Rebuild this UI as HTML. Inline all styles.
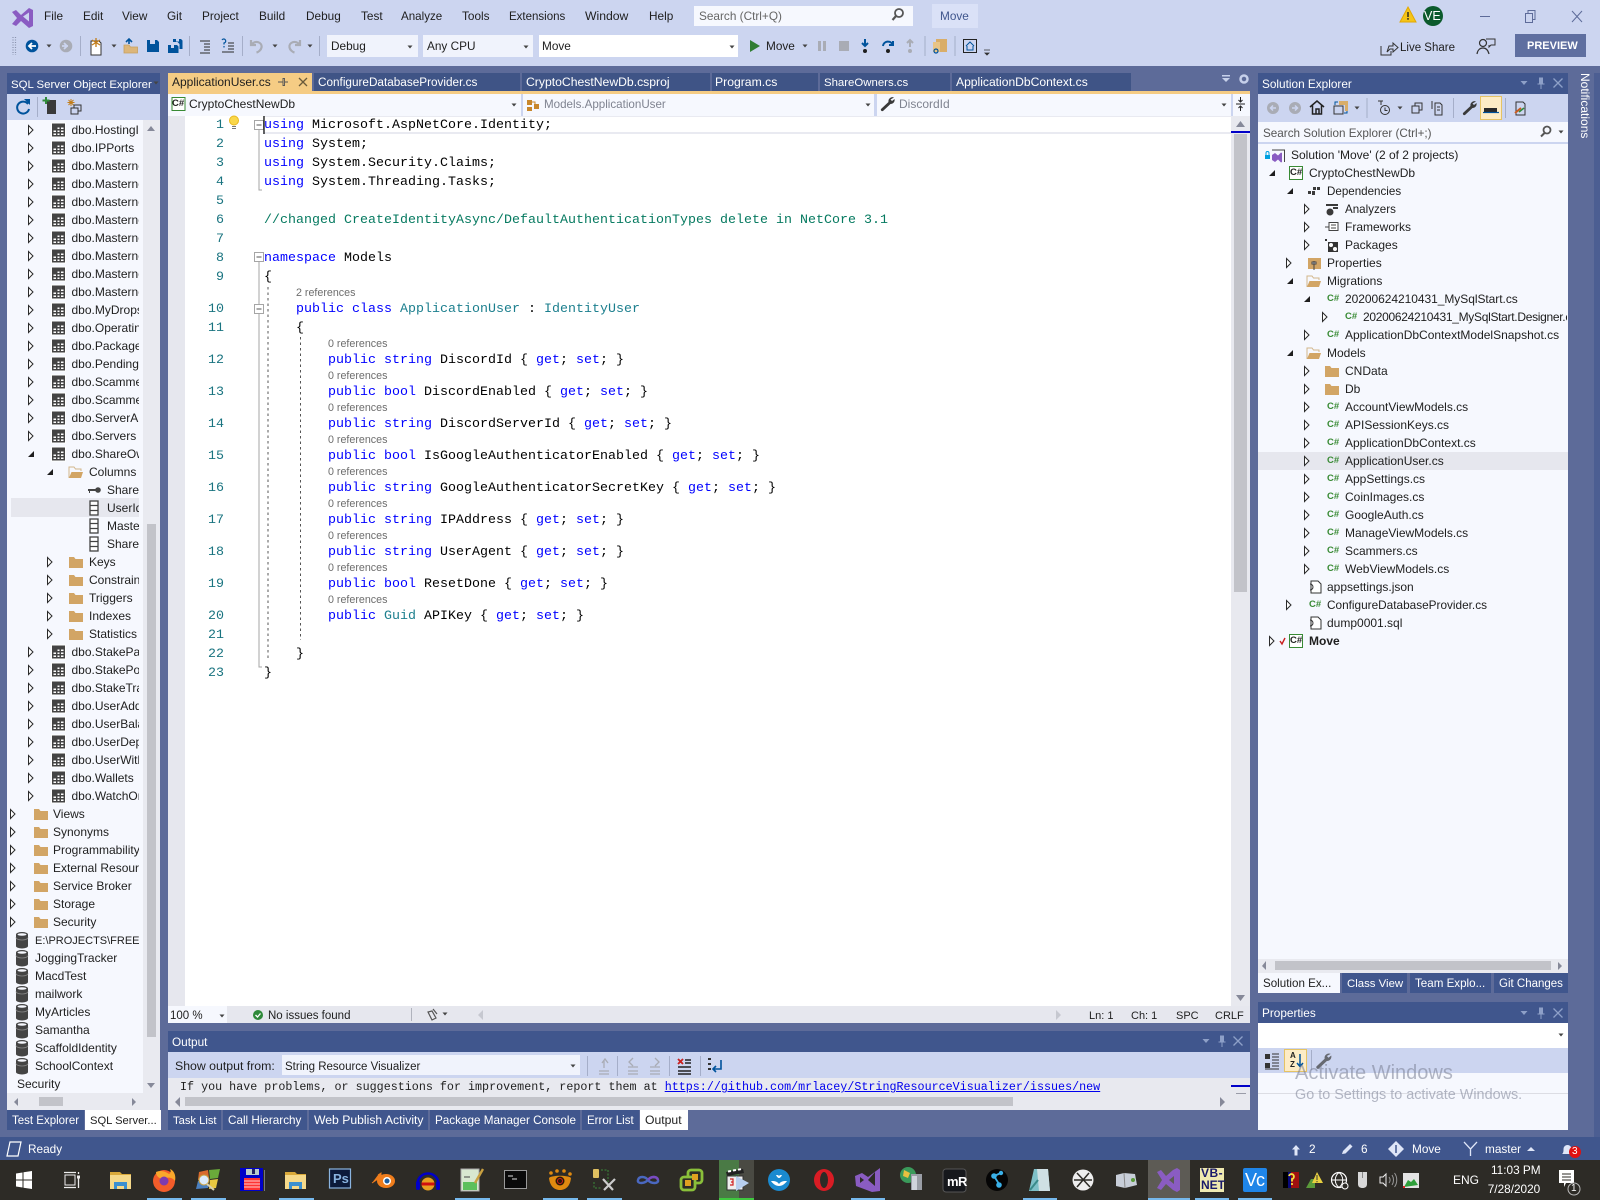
<!DOCTYPE html>
<html><head><meta charset="utf-8"><title>Visual Studio</title>
<style>
html,body{margin:0;padding:0;background:#5d6b99;width:1600px;height:1200px;overflow:hidden}
body{position:relative;font:12.2px/18px "Liberation Sans",sans-serif;color:#1e1e1e}
.b{position:absolute}
.t{position:absolute;white-space:nowrap;font:11.8px/18px "Liberation Sans",sans-serif;color:#1e1e1e}
.tr .t{font-size:12px}
.w{color:#fff}
.g{color:#7f8390}
.c{position:absolute;left:264px;white-space:pre;font:13.3px/19px "Liberation Mono",monospace;letter-spacing:.02px;color:#000}
.n{position:absolute;left:190px;width:34px;text-align:right;font:13.3px/19px "Liberation Mono",monospace;color:#1a7480}
.r{position:absolute;left:328px;white-space:nowrap;font:10.7px/14px "Liberation Sans",sans-serif;color:#6d6d6d}
.k{color:#0000ff}.y{color:#1c7f8e}.m{color:#067a60}
.cs{position:absolute;white-space:nowrap;font:bold 9.5px/18px "Liberation Sans",sans-serif;color:#388a34}
svg{position:absolute;left:0;top:0}
</style></head><body>
<!-- backgrounds -->
<div class="b" style="left:0;top:0;width:1600px;height:66px;background:#ccd5f0"></div>
<div class="b" style="left:694px;top:6px;width:219px;height:20px;background:#f6f8fe;border:0"></div>
<div class="b" style="left:932px;top:4px;width:46px;height:24px;background:#dae1f7"></div>
<div class="b" style="left:327px;top:35px;width:91px;height:22px;background:#f0f3fc"></div>
<div class="b" style="left:423px;top:35px;width:110px;height:22px;background:#f0f3fc"></div>
<div class="b" style="left:539px;top:35px;width:199px;height:22px;background:#fff"></div>
<div class="b" style="left:1515px;top:34px;width:71px;height:23px;background:#5f6fa0"></div>
<!-- left panel -->
<div class="b" style="left:7px;top:73px;width:153px;height:21px;background:#40568d"></div>
<div class="b" style="left:7px;top:94px;width:153px;height:26px;background:#ccd5f0"></div>
<div class="b" style="left:7px;top:120px;width:153px;height:990px;background:#f6f8fe"></div>
<div class="b" style="left:143px;top:120px;width:17px;height:990px;background:#e9eaf0"></div>
<div class="b" style="left:147px;top:524px;width:9px;height:513px;background:#c2c3c9"></div>
<div class="b" style="left:7px;top:1093px;width:153px;height:17px;background:#e9eaf0"></div>
<div class="b" style="left:39px;top:1097px;width:24px;height:9px;background:#c2c3c9"></div>
<div class="b" style="left:11px;top:498px;width:128px;height:19px;background:#e6e7ee"></div>
<div class="b" style="left:7px;top:1110px;width:77px;height:20px;background:#40568d"></div>
<div class="b" style="left:85px;top:1110px;width:76px;height:20px;background:#fff"></div>
<!-- tabs -->
<div class="b" style="left:168px;top:73px;width:144px;height:18px;background:#f5cc84"></div>
<div class="b" style="left:314px;top:73px;width:206px;height:18px;background:#3f5486"></div>
<div class="b" style="left:522px;top:73px;width:188px;height:18px;background:#3f5486"></div>
<div class="b" style="left:712px;top:73px;width:106px;height:18px;background:#3f5486"></div>
<div class="b" style="left:820px;top:73px;width:130px;height:18px;background:#3f5486"></div>
<div class="b" style="left:952px;top:73px;width:179px;height:18px;background:#3f5486"></div>
<div class="b" style="left:168px;top:91px;width:1082px;height:3px;background:#f5cc84"></div>
<!-- editor -->
<div class="b" style="left:168px;top:94px;width:1082px;height:22px;background:#f6f8fe"></div>
<div class="b" style="left:521px;top:94px;width:2px;height:22px;background:#ccd5f0"></div>
<div class="b" style="left:874px;top:94px;width:3px;height:22px;background:#ccd5f0"></div>
<div class="b" style="left:1231px;top:94px;width:2px;height:22px;background:#ccd5f0"></div>
<div class="b" style="left:168px;top:116px;width:1082px;height:890px;background:#fff"></div>
<div class="b" style="left:168px;top:116px;width:17px;height:890px;background:#e6e7ee"></div>
<div class="b" style="left:263px;top:116px;width:968px;height:15px;border:1px solid #e9eaf1;border-width:1px 0 2px 1px"></div>
<div class="b" style="left:1231px;top:116px;width:19px;height:890px;background:#e8e9ef"></div>
<div class="b" style="left:1234px;top:134px;width:13px;height:458px;background:#c2c3c9"></div>
<div class="b" style="left:1231px;top:131px;width:19px;height:2px;background:#0000c8"></div>
<div class="b" style="left:168px;top:1006px;width:1082px;height:17px;background:#e6e7ee"></div>
<div class="b" style="left:168px;top:1006px;width:59px;height:17px;background:#f6f8fe"></div>
<div class="b" style="left:411px;top:1008px;width:1px;height:13px;background:#b0b3bd"></div>
<!-- output -->
<div class="b" style="left:168px;top:1031px;width:1082px;height:21px;background:#40568d"></div>
<div class="b" style="left:168px;top:1052px;width:1082px;height:26px;background:#ccd5f0"></div>
<div class="b" style="left:282px;top:1055px;width:298px;height:20px;background:#f0f3fc"></div>
<div class="b" style="left:168px;top:1078px;width:1082px;height:32px;background:#e8e9ef"></div>
<div class="b" style="left:185px;top:1097px;width:828px;height:9px;background:#c2c3c9"></div>
<div class="b" style="left:1231px;top:1085px;width:19px;height:2px;background:#0000c8"></div>
<div class="b" style="left:1231px;top:1093px;width:10px;height:1px;background:#9a9ca8;margin-left:5px"></div>
<!-- bottom tabs -->
<div class="b" style="left:168px;top:1110px;width:53px;height:20px;background:#40568d"></div>
<div class="b" style="left:223px;top:1110px;width:84px;height:20px;background:#40568d"></div>
<div class="b" style="left:309px;top:1110px;width:119px;height:20px;background:#40568d"></div>
<div class="b" style="left:430px;top:1110px;width:150px;height:20px;background:#40568d"></div>
<div class="b" style="left:582px;top:1110px;width:57px;height:20px;background:#40568d"></div>
<div class="b" style="left:640px;top:1110px;width:48px;height:20px;background:#fff"></div>
<!-- solution explorer -->
<div class="b" style="left:1258px;top:73px;width:310px;height:21px;background:#40568d"></div>
<div class="b" style="left:1258px;top:94px;width:310px;height:28px;background:#ccd5f0"></div>
<div class="b" style="left:1480px;top:96px;width:20px;height:22px;background:#fdecc6;border:1px solid #e5c365"></div>
<div class="b" style="left:1258px;top:122px;width:310px;height:20px;background:#f6f8fe"></div>
<div class="b" style="left:1258px;top:142px;width:310px;height:817px;background:#f6f8fe;border-top:2px solid #ccd5f0;box-sizing:border-box"></div>
<div class="b" style="left:1258px;top:452px;width:310px;height:18px;background:#e6e7ee"></div>
<div class="b" style="left:1258px;top:959px;width:310px;height:14px;background:#e9eaf0"></div>
<div class="b" style="left:1275px;top:961px;width:276px;height:9px;background:#c2c3c9"></div>
<div class="b" style="left:1258px;top:973px;width:82px;height:20px;background:#f6f8fe"></div>
<div class="b" style="left:1342px;top:973px;width:65px;height:20px;background:#40568d"></div>
<div class="b" style="left:1410px;top:973px;width:81px;height:20px;background:#40568d"></div>
<div class="b" style="left:1494px;top:973px;width:74px;height:20px;background:#40568d"></div>
<!-- properties -->
<div class="b" style="left:1258px;top:1002px;width:310px;height:21px;background:#40568d"></div>
<div class="b" style="left:1258px;top:1023px;width:310px;height:25px;background:#fff"></div>
<div class="b" style="left:1258px;top:1048px;width:310px;height:25px;background:#ccd5f0"></div>
<div class="b" style="left:1258px;top:1073px;width:310px;height:57px;background:#f6f8fe"></div>
<div class="b" style="left:1258px;top:1093px;width:310px;height:1px;background:#dcdde4"></div>
<div class="b" style="left:1284px;top:1049px;width:21px;height:21px;background:#fdecc6;border:1px solid #e5c365"></div>
<div class="b" style="left:1594px;top:73px;width:6px;height:1064px;background:#4c5e92"></div>
<!-- status + taskbar -->
<div class="b" style="left:0;top:1137px;width:1600px;height:23px;background:#40568d"></div>
<div class="b" style="left:0;top:1160px;width:1600px;height:40px;background:#2d2b26"></div>
<div class="b" style="left:719px;top:1160px;width:20px;height:38px;background:#4a7a45"></div>
<div class="b" style="left:739px;top:1160px;width:15px;height:38px;background:#4a4a43"></div>
<div class="b" style="left:1148px;top:1160px;width:42px;height:38px;background:#5d5b55"></div>
<div class="b" style="left:147px;top:1198px;width:35px;height:2px;background:#76b9ed"></div>
<div class="b" style="left:191px;top:1198px;width:35px;height:2px;background:#76b9ed"></div>
<div class="b" style="left:279px;top:1198px;width:35px;height:2px;background:#76b9ed"></div>
<div class="b" style="left:455px;top:1198px;width:35px;height:2px;background:#76b9ed"></div>
<div class="b" style="left:543px;top:1198px;width:35px;height:2px;background:#76b9ed"></div>
<div class="b" style="left:587px;top:1198px;width:35px;height:2px;background:#76b9ed"></div>
<div class="b" style="left:719px;top:1198px;width:35px;height:2px;background:#3fc83f"></div>
<div class="b" style="left:851px;top:1198px;width:34px;height:2px;background:#76b9ed"></div>
<div class="b" style="left:1023px;top:1198px;width:34px;height:2px;background:#76b9ed"></div>
<div class="b" style="left:1148px;top:1198px;width:42px;height:2px;background:#76b9ed"></div>
<div class="b" style="left:1195px;top:1198px;width:34px;height:2px;background:#76b9ed"></div>
<div class="b" style="left:1238px;top:1198px;width:34px;height:2px;background:#76b9ed"></div>

<!-- icons overlay -->
<svg width="1600" height="1200" viewBox="0 0 1600 1200">
<defs>
<g id="a0"><path d="M-2.5-4.5L2 0-2.5 4.5z" fill="#fff" stroke="#2a2a2a"/></g>
<g id="a1"><path d="M3-3V3H-3z" fill="#1e1e1e"/></g>
<g id="tb"><rect x="-7.500" y="-7.500" width="15" height="15" fill="#fff"/><rect x="-6.500" y="-6.500" width="13" height="13" fill="#444"/><path d="M-1-2.500h2v1.500h-2zM2.500-2.500h2.500v1.500h-2.500zM-5 .5h2.500V2H-5zM-1 .5h2V2h-2zM2.500 .5H5V2H2.500zM-5 3.500h2.500V5H-5zM-1 3.500h2V5h-2zM2.500 3.500H5V5H2.500z" fill="#fff"/></g>
<g id="fo"><path d="M-7-5h5l1.500 2H7V6H-7z" fill="#d2a565"/></g>
<g id="fx"><path d="M-7 6V-5h5l1.500 2H5v2" fill="none" stroke="#d2b68a"/><path d="M-7 6l2.500-6H7L5 6z" fill="#d2a565"/></g>
<g id="col"><rect x="-4" y="-7" width="8" height="14" fill="#fff" stroke="#424242" stroke-width="1.300"/><path d="M-4-2.500h8M-4 2.500h8" stroke="#424242" stroke-width="1.200"/></g>
<g id="key"><circle cx="4" cy="0" r="2.800" fill="#444"/><path d="M-6-1h8v2h-6v2h-1v-2h-1z" fill="#444"/></g>
<g id="db"><path d="M-6-5.500A6 2.500 0 0 1 6-5.500V6A6 2.500 0 0 1-6 6z" fill="#444"/><ellipse cx="0" cy="-5.500" rx="4.500" ry="1.300" fill="#f6f8fe"/><path d="M-6-2.500A6 2.500 0 0 0 6-2.500" fill="none" stroke="#888" stroke-width=".8"/></g>
<g id="bx"><rect x="-6.500" y="-6.500" width="13" height="13" fill="#fff" stroke="#388a34"/></g>
<g id="dd"><path d="M-2.500-1.500h5L0 1.500z" fill="#444"/></g>
<g id="ddw"><path d="M-3.500-2h7L0 2z" fill="#8ea0c8"/></g>
<g id="pin"><path d="M-2-5.500h4v6h1.500v1H.5V6h-1V1.500h-3v-1H-2z" fill="#8ea0c8"/></g>
<g id="xx"><path d="M-4.500-4.500l9 9M4.500-4.500l-9 9" stroke="#8ea0c8" stroke-width="1.300"/></g>
<g id="sp"><rect x="-.5" y="-10" width="1" height="20" fill="#a5aec9"/></g>
<g id="wr"><path d="M7-6.500A4 4 0 0 0 1.500-2L-6 5a1.500 1.500 0 0 0 2 2l7.500-7A4 4 0 0 0 7.500-5L5-3 3.500-4.500z" fill="#3a3a3a"/></g>
</defs>

<!-- title bar icons -->
<path d="M12 12l4-2 5 5 8-7 4 2v16l-4 2-8-7-5 5-4-2 5-6z" fill="#8a5cc2"/><path d="M23 16.500l6-4v9z" fill="#ccd5f0"/>
<circle cx="899" cy="13" r="4" fill="none" stroke="#555" stroke-width="1.800"/><path d="M896 16l-3.500 4" stroke="#555" stroke-width="2.200"/>
<path d="M1408 7l8 15h-16z" fill="#f5c518" stroke="#e3a800"/><path d="M1407.300 12h1.400v5h-1.400zM1407.300 18h1.400v1.800h-1.400z" fill="#222"/>
<circle cx="1433" cy="16" r="10" fill="#0b5a2c"/>
<path d="M1480 16.500h10" stroke="#5d6b99"/><rect x="1525.500" y="13.500" width="7" height="9" fill="none" stroke="#5d6b99"/><path d="M1528 13.500v-3h7v9h-2.500" fill="none" stroke="#5d6b99"/>
<path d="M1572 11l10 11M1582 11l-10 11" stroke="#5d6b99"/>

<!-- main toolbar -->
<path d="M13 37v18M15.500 37v18" stroke="#8a93ad" stroke-width="1.200" stroke-dasharray="1 1.500"/>
<circle cx="32" cy="46" r="6.300" fill="#00539c"/><path d="M36 46h-6M32 43l-3 3 3 3" fill="none" stroke="#fff" stroke-width="1.800"/><use href="#dd" x="49" y="46"/>
<circle cx="66" cy="46" r="6.300" fill="#a9acb5"/><path d="M62 46h6M64 43l3 3-3 3" fill="none" stroke="#ccd5f0" stroke-width="1.800"/>
<use href="#sp" x="80.500" y="46"/>
<path d="M91 41v14h10V43l-2-2z" fill="#fff" stroke="#333"/><path d="M96 38v9M92 40l8 5M100 40l-8 5" stroke="#c27d1a" stroke-width="1.300"/><use href="#dd" x="114" y="46"/>
<path d="M124 53V45h5l1.500 2h7v6z" fill="#dcb67a" stroke="#c6a060" stroke-width=".8"/><path d="M126 42l3-3 3 3M129 39v5" fill="none" stroke="#00539c" stroke-width="1.600"/>
<path d="M147 40h10l2 2v10h-12z" fill="#00539c"/><rect x="150" y="40" width="5" height="4" fill="#ccd5f0"/>
<path d="M168 45h9l1.500 1.500V53H168z" fill="#00539c"/><path d="M173 39h8l1.500 1.500V49h-3v-5l-2-2h-4.500z" fill="#00539c"/><rect x="171" y="45" width="3" height="3" fill="#ccd5f0"/><rect x="176" y="39" width="3" height="2.500" fill="#ccd5f0"/>
<use href="#sp" x="189.500" y="46"/>
<path d="M200 41h10M204 44h6M204 47h6M204 50h6M200 53h10" stroke="#2a2a2a"/>
<path d="M222 40a2 2 0 1 1 2 3v1.500M224 46v1.500" fill="none" stroke="#00539c" stroke-width="1.200"/><path d="M228 43h6M228 46h6M228 49h6M222 52h12" stroke="#2a2a2a"/>
<use href="#sp" x="242.500" y="46"/>
<path d="M251 40v5h5M251.500 44.500c4-5 11-2 10 3-.5 2.500-3 4.500-5 5" fill="none" stroke="#a9acb5" stroke-width="2.200"/><use href="#dd" x="275" y="46"/>
<path d="M300 40v5h-5M299.500 44.500c-4-5-11-2-10 3 .5 2.500 3 4.500 5 5" fill="none" stroke="#a9acb5" stroke-width="2.200"/><use href="#dd" x="310" y="46"/>
<use href="#sp" x="319.500" y="46"/>
<use href="#dd" x="410" y="47"/><use href="#dd" x="526" y="47"/><use href="#dd" x="732" y="47"/>
<path d="M750 40l10 6-10 6z" fill="#2f7d32"/><use href="#dd" x="805" y="46"/>
<path d="M818 41h3v10h-3zM823 41h3v10h-3z" fill="#a9acb5"/><rect x="839" y="41" width="10" height="10" fill="#a9acb5"/>
<path d="M865 39v7M862 43l3 3 3-3" fill="none" stroke="#00539c" stroke-width="2"/><circle cx="865" cy="51" r="2" fill="#1e1e1e"/>
<path d="M883 46a5 5 0 0 1 9.500-1.500M893 41v4h-4" fill="none" stroke="#00539c" stroke-width="2"/><circle cx="888" cy="51" r="2" fill="#1e1e1e"/>
<path d="M910 47v-7M907 43l3-3 3 3" fill="none" stroke="#a9acb5" stroke-width="2"/><circle cx="910" cy="51" r="2" fill="#a9acb5"/>
<use href="#sp" x="925" y="46"/>
<rect x="936" y="39" width="11" height="13" fill="#d9ad68"/><rect x="933" y="42" width="7" height="10" fill="#e8c486"/><circle cx="936" cy="51" r="2" fill="none" stroke="#00539c" stroke-width="1.200"/>
<use href="#sp" x="955" y="46"/>
<rect x="963.500" y="39.500" width="13" height="13" fill="none" stroke="#222"/><path d="M966 46l4-4 4 4M967 46v4h6v-4" fill="none" stroke="#00539c"/>
<path d="M984 50h6M985 53h4l-2 2z" fill="#333" stroke="#333" stroke-width=".8"/>
<path d="M1381 46v9h10v-4" fill="none" stroke="#333"/><path d="M1387 52l2-6h4v-3l5 4.500-5 4.500v-3h-3z" fill="none" stroke="#333"/>
<circle cx="1483" cy="43" r="3.500" fill="none" stroke="#333" stroke-width="1.200"/><path d="M1477 54c.5-4 3-6 6-6s5 2 6 6" fill="none" stroke="#333" stroke-width="1.200"/><path d="M1486 39h9v6h-4l-2 2v-2" fill="none" stroke="#333"/>

<!-- left panel toolbar -->
<path d="M28 104a6 6 0 1 0 1 5" fill="none" stroke="#00539c" stroke-width="2"/><path d="M24 99h6v6z" fill="#00539c"/>
<use href="#sp" x="37.500" y="107"/>
<rect x="47" y="100" width="9" height="14" fill="#3a3a3a"/><path d="M46 97v7M42.500 100.500h7" stroke="#2f8a3a" stroke-width="2"/>
<path d="M71 99v7M67.500 102.500h7M68.500 100l5 5M73.500 100l-5 5" stroke="#c27d1a"/><rect x="74" y="105" width="7" height="6" fill="none" stroke="#333"/><rect x="71" y="108" width="7" height="6" fill="#ccd5f0" stroke="#333"/>
<use href="#dd" x="156" y="83"/>
<path d="M151 126l-4 5h8z" fill="#868999"/><path d="M147 1083h8l-4 5z" fill="#868999"/>
<path d="M18 1098l-4 4 4 4z" fill="#868999"/><path d="M132 1098l4 4-4 4z" fill="#868999"/>

<!-- left tree -->
<g>
<use href="#a0" x="31" y="130"/><use href="#tb" x="58.500" y="130"/>
<use href="#a0" x="31" y="148"/><use href="#tb" x="58.500" y="148"/>
<use href="#a0" x="31" y="166"/><use href="#tb" x="58.500" y="166"/>
<use href="#a0" x="31" y="184"/><use href="#tb" x="58.500" y="184"/>
<use href="#a0" x="31" y="202"/><use href="#tb" x="58.500" y="202"/>
<use href="#a0" x="31" y="220"/><use href="#tb" x="58.500" y="220"/>
<use href="#a0" x="31" y="238"/><use href="#tb" x="58.500" y="238"/>
<use href="#a0" x="31" y="256"/><use href="#tb" x="58.500" y="256"/>
<use href="#a0" x="31" y="274"/><use href="#tb" x="58.500" y="274"/>
<use href="#a0" x="31" y="292"/><use href="#tb" x="58.500" y="292"/>
<use href="#a0" x="31" y="310"/><use href="#tb" x="58.500" y="310"/>
<use href="#a0" x="31" y="328"/><use href="#tb" x="58.500" y="328"/>
<use href="#a0" x="31" y="346"/><use href="#tb" x="58.500" y="346"/>
<use href="#a0" x="31" y="364"/><use href="#tb" x="58.500" y="364"/>
<use href="#a0" x="31" y="382"/><use href="#tb" x="58.500" y="382"/>
<use href="#a0" x="31" y="400"/><use href="#tb" x="58.500" y="400"/>
<use href="#a0" x="31" y="418"/><use href="#tb" x="58.500" y="418"/>
<use href="#a0" x="31" y="436"/><use href="#tb" x="58.500" y="436"/>
<use href="#a1" x="31" y="454"/><use href="#tb" x="58.500" y="454"/>
<use href="#a1" x="50" y="472"/><use href="#fx" x="76" y="472"/>
<use href="#key" x="94" y="490"/><use href="#col" x="94" y="508"/><use href="#col" x="94" y="526"/><use href="#col" x="94" y="544"/>
<use href="#a0" x="50" y="562"/><use href="#fo" x="76" y="562"/>
<use href="#a0" x="50" y="580"/><use href="#fo" x="76" y="580"/>
<use href="#a0" x="50" y="598"/><use href="#fo" x="76" y="598"/>
<use href="#a0" x="50" y="616"/><use href="#fo" x="76" y="616"/>
<use href="#a0" x="50" y="634"/><use href="#fo" x="76" y="634"/>
<use href="#a0" x="31" y="652"/><use href="#tb" x="58.500" y="652"/>
<use href="#a0" x="31" y="670"/><use href="#tb" x="58.500" y="670"/>
<use href="#a0" x="31" y="688"/><use href="#tb" x="58.500" y="688"/>
<use href="#a0" x="31" y="706"/><use href="#tb" x="58.500" y="706"/>
<use href="#a0" x="31" y="724"/><use href="#tb" x="58.500" y="724"/>
<use href="#a0" x="31" y="742"/><use href="#tb" x="58.500" y="742"/>
<use href="#a0" x="31" y="760"/><use href="#tb" x="58.500" y="760"/>
<use href="#a0" x="31" y="778"/><use href="#tb" x="58.500" y="778"/>
<use href="#a0" x="31" y="796"/><use href="#tb" x="58.500" y="796"/>
<use href="#a0" x="13" y="814"/><use href="#fo" x="41" y="814"/>
<use href="#a0" x="13" y="832"/><use href="#fo" x="41" y="832"/>
<use href="#a0" x="13" y="850"/><use href="#fo" x="41" y="850"/>
<use href="#a0" x="13" y="868"/><use href="#fo" x="41" y="868"/>
<use href="#a0" x="13" y="886"/><use href="#fo" x="41" y="886"/>
<use href="#a0" x="13" y="904"/><use href="#fo" x="41" y="904"/>
<use href="#a0" x="13" y="922"/><use href="#fo" x="41" y="922"/>
<use href="#db" x="22" y="940"/><use href="#db" x="22" y="958"/><use href="#db" x="22" y="976"/><use href="#db" x="22" y="994"/><use href="#db" x="22" y="1012"/><use href="#db" x="22" y="1030"/><use href="#db" x="22" y="1048"/><use href="#db" x="22" y="1066"/>
</g>

<!-- editor tab / nav -->
<path d="M278 82h5M283 78.500v7h1.500v-7zM288 82h-3" stroke="#555" fill="none" stroke-width=".9"/><path d="M299 78l8 8M307 78l-8 8" stroke="#6a5a3a" stroke-width="1.300"/>
<path d="M1222 78h8l-4 4zM1222 75h8v1.500h-8z" fill="#c6d0ea"/>
<circle cx="1244" cy="79" r="3.500" fill="none" stroke="#c6d0ea" stroke-width="2.500"/>
<use href="#bx" x="178.500" y="104"/><use href="#dd" x="514" y="105"/>
<path d="M527 100h5v5h-5zM534 104h5v5h-5zM527 107h5v4h-5z" fill="#c8872c"/><path d="M532 102h3v3" fill="none" stroke="#c8872c"/>
<use href="#dd" x="868" y="105"/><use href="#wr" x="887" y="104"/><use href="#dd" x="1224" y="105"/>
<path d="M1236 104h9M1240.500 97v5M1238.500 100l2 2 2-2M1240.500 111v-5M1238.500 108l2-2 2 2" fill="none" stroke="#222"/>
<path d="M1236 127h9l-4.500-6z" fill="#868999"/><path d="M1236 995h9l-4.500 6z" fill="#868999"/>

<!-- code gutter -->
<path d="M259 129v61h3M259 262v405h3" fill="none" stroke="#a5a5a5"/>
<path d="M268 287V660" stroke="#555" stroke-dasharray="2.500 3"/><path d="M300.500 337V640" stroke="#555" stroke-dasharray="2.500 3"/>
<g fill="#fff" stroke="#a5a5a5"><rect x="254.500" y="120.500" width="9" height="9"/><rect x="254.500" y="252.500" width="9" height="9"/><rect x="254.500" y="304.500" width="9" height="9"/></g>
<path d="M256.500 125h5M256.500 257h5M256.500 309h5" stroke="#555"/>
<path d="M264 116v18" stroke="#000" stroke-width="1.200"/>
<circle cx="234" cy="120.500" r="4.500" fill="#f9d74a" stroke="#e8b820"/><path d="M232 126.500h4M232 128.500h4" stroke="#777"/>

<!-- editor status -->
<use href="#dd" x="222" y="1016"/>
<circle cx="258" cy="1015" r="5" fill="#2f8a3a"/><path d="M255.500 1015l2 2 3-3.500" stroke="#fff" stroke-width="1.300" fill="none"/>
<path d="M428 1012l4 8 4-2-4-7zM433 1009l4 5" fill="none" stroke="#555" stroke-width="1.200"/><use href="#dd" x="445" y="1014"/>
<path d="M483 1010l-5 5 5 5z" fill="#c6c8d0"/><path d="M1056 1010l5 5-5 5z" fill="#c6c8d0"/>

<!-- output bar -->
<use href="#ddw" x="1206" y="1041"/><use href="#pin" x="1222" y="1041"/><use href="#xx" x="1238" y="1041"/>
<use href="#dd" x="573" y="1066"/>
<path d="M587.500 1056v20M617.500 1056v20M669.500 1056v20M700.500 1056v20" stroke="#a5aec9"/>
<path d="M599 1071h10M599 1074h10M604 1060v8M602 1063l3-4 3 4" fill="none" stroke="#a9acb5" stroke-width="1.300"/>
<path d="M628 1071h10M628 1074h10M628 1067h10M633 1058l-4 4 4 4" fill="none" stroke="#a9acb5" stroke-width="1.300"/>
<path d="M650 1071h10M650 1074h10M650 1067h10M655 1058l4 4-4 4" fill="none" stroke="#a9acb5" stroke-width="1.300"/>
<path d="M678 1059l5 5M683 1059l-5 5" stroke="#c82020" stroke-width="1.800"/><path d="M685 1060h6M685 1063h6M678 1067h13M678 1071h13M678 1074h13" stroke="#222" stroke-width="1.600"/>
<path d="M721 1060v9h-8M716 1066l-3 3 3 3" fill="none" stroke="#00539c" stroke-width="1.600"/><path d="M708 1059h3M708 1064h3M708 1069h3" stroke="#333" stroke-width="2"/>
<path d="M180 1097l-5 5 5 5z" fill="#868999"/><path d="M1220 1097l5 5-5 5z" fill="#868999"/>

<!-- solution explorer icons -->
<use href="#ddw" x="1524" y="83"/><use href="#pin" x="1541" y="83"/><use href="#xx" x="1558" y="83"/>
<circle cx="1273" cy="108" r="6" fill="#a9acb5"/><circle cx="1295" cy="108" r="6" fill="#a9acb5"/>
<path d="M1276 108h-5M1273 105.500l-2.500 2.500 2.500 2.500M1292 108h5M1295 105.500l2.500 2.500-2.500 2.500" fill="none" stroke="#ccd5f0" stroke-width="1.500"/>
<path d="M1310 107l7-6 7 6M1312.500 105v9h9v-9M1316 114v-5h3v5" fill="none" stroke="#222" stroke-width="1.500"/>
<rect x="1334" y="106" width="9" height="8" fill="none" stroke="#333"/><path d="M1339 101h9v10h-3v-6h-6z" fill="#d9ad68"/><path d="M1338 102h-3v3M1344 113h3v-2" fill="none" stroke="#00539c"/><use href="#dd" x="1357" y="108"/>
<use href="#sp" x="1367" y="108"/>
<circle cx="1385" cy="110" r="4.500" fill="none" stroke="#333"/><path d="M1385 107.500v3h2.500M1378 101h5M1381 101v4" stroke="#333" fill="none"/><use href="#dd" x="1400" y="108"/>
<rect x="1412" y="106" width="7" height="7" fill="none" stroke="#333"/><path d="M1415 106v-3h7v7h-3" fill="none" stroke="#333"/>
<path d="M1435 103h5l2 2v10h-7z" fill="none" stroke="#333"/><path d="M1432 101v8M1437 107h3M1437 110h3" stroke="#333"/>
<use href="#sp" x="1453.500" y="108"/>
<use href="#wr" x="1469" y="108"/>
<rect x="1484" y="108" width="13" height="4" fill="#2a2a2a"/><path d="M1483 112.500h16" stroke="#00539c" stroke-width="1.200"/>
<use href="#sp" x="1505.500" y="108"/>
<path d="M1516 102h7l2 2v11h-9z" fill="none" stroke="#333"/><path d="M1515 113l6-5" stroke="#c85a20" stroke-width="2"/><path d="M1519 112l5-4" stroke="#2f8a3a" stroke-width="1.500"/>
<circle cx="1547" cy="130" r="3.500" fill="none" stroke="#555" stroke-width="1.800"/><path d="M1544.500 133l-3.500 3.500" stroke="#555" stroke-width="2"/><use href="#dd" x="1561" y="132"/>

<!-- SE tree icons -->
<rect x="1265" y="155" width="5" height="4" fill="#00a0e0"/><path d="M1266 155v-2a1.500 1.500 0 0 1 3 0v2" fill="none" stroke="#00a0e0"/>
<path d="M1272 155l3-2 3 2.500 3-3 1 .5v9l-1 .5-3-3-3 2.500-3-2z" fill="#8a5cc2"/><path d="M1272 150h12.500v12" fill="none" stroke="#444"/>
<use href="#a1" x="1272" y="173"/><use href="#bx" x="1296" y="173"/>
<use href="#a1" x="1290" y="191"/><path d="M1308 191h3v3h-3zM1312 191h3v4h-3zM1313 187h3v3h-3zM1317 187h3v3h-3z" fill="#3a3a3a"/>
<use href="#a0" x="1307" y="209"/><path d="M1326 204h12v2h-12zM1333 207h5v2h-5z" fill="#3a3a3a"/><circle cx="1330" cy="212" r="3.500" fill="#3a3a3a"/>
<use href="#a0" x="1307" y="227"/><rect x="1329" y="222.500" width="9" height="8" fill="#fff" stroke="#444"/><path d="M1325 227h4M1331 225h5M1331 228h5" stroke="#444"/>
<use href="#a0" x="1307" y="245"/><rect x="1328" y="242" width="10" height="10" fill="#333"/><circle cx="1331" cy="245" r="2" fill="#fff"/><circle cx="1335" cy="249" r="2" fill="#fff"/><rect x="1325" y="239" width="2" height="2" fill="#333"/>
<use href="#a0" x="1289" y="263"/><path d="M1308 258h13v11h-13z" fill="#d2a565"/><path d="M1314 261v9M1312 262h4v2h-4z" stroke="#444" fill="#fff"/>
<use href="#a1" x="1290" y="281"/><use href="#fx" x="1314" y="281"/>
<use href="#a1" x="1307" y="299"/>
<use href="#a0" x="1325" y="317"/>
<use href="#a0" x="1307" y="335"/>
<use href="#a1" x="1290" y="353"/><use href="#fx" x="1314" y="353"/>
<use href="#a0" x="1307" y="371"/><use href="#fo" x="1332" y="371"/>
<use href="#a0" x="1307" y="389"/><use href="#fo" x="1332" y="389"/>
<use href="#a0" x="1307" y="407"/><use href="#a0" x="1307" y="425"/><use href="#a0" x="1307" y="443"/><use href="#a0" x="1307" y="461"/><use href="#a0" x="1307" y="479"/><use href="#a0" x="1307" y="497"/><use href="#a0" x="1307" y="515"/><use href="#a0" x="1307" y="533"/><use href="#a0" x="1307" y="551"/><use href="#a0" x="1307" y="569"/>
<path d="M1311 581h7l3 3v9h-10z" fill="#fff" stroke="#333"/><path d="M1310 590a3 3 0 0 0 0-6" fill="none" stroke="#333"/>
<use href="#a0" x="1289" y="605"/>
<path d="M1311 617h7l3 3v9h-10z" fill="#fff" stroke="#333"/><path d="M1310 626a3 3 0 0 0 0-6" fill="none" stroke="#333"/>
<use href="#a0" x="1272" y="641"/><path d="M1280 641l2 3 3-6" fill="none" stroke="#c82020" stroke-width="1.400"/><use href="#bx" x="1296" y="641"/>
<path d="M1266 961l-4 5 4 4z" fill="#868999"/><path d="M1558 962l4 4-4 4z" fill="#868999"/>

<!-- properties icons -->
<use href="#ddw" x="1524" y="1013"/><use href="#pin" x="1541" y="1013"/><use href="#xx" x="1558" y="1013"/>
<use href="#dd" x="1561" y="1035"/>
<rect x="1265" y="1054" width="5" height="5" fill="#333"/><rect x="1265" y="1063" width="5" height="5" fill="#333"/><path d="M1272 1054h7M1272 1057h7M1272 1060h7M1272 1063h7M1272 1066h7M1265 1069h14" stroke="#333"/>
<path d="M1300 1054v12M1297 1063l3 3.500 3-3.500" fill="none" stroke="#00539c" stroke-width="1.500"/>
<g transform="translate(1323 1061) scale(1.100)" opacity=".7"><use href="#wr" fill="#888"/></g>
<use href="#sp" x="1311.500" y="1060"/>

<!-- status icons -->
<path d="M10 1142h11l-3 14H7z" fill="none" stroke="#fff" stroke-width="1.200"/>
<path d="M1296 1145l-4 4.500h2.500v6h3v-6h2.500z" fill="#dfe6f8"/>
<path d="M1342 1154l1-3 7-7 2.500 2.500-7 7z" fill="#dfe6f8"/>
<path d="M1396 1141l8 8-8 8-8-8z" fill="#dfe6f8"/><path d="M1396 1145v8" stroke="#40568d" stroke-width="1.500"/>
<path d="M1464 1142l6.500 7v7M1477 1142l-6.500 7" fill="none" stroke="#dfe6f8" stroke-width="1.300"/>
<path d="M1527 1151l4-4 4 4z" fill="#dfe6f8"/>
<path d="M1562 1154c1.500-1 1.500-3 1.500-5a4 4 0 0 1 8 0c0 2 0 4 1.500 5z" fill="#dfe6f8"/>
<circle cx="1575" cy="1152" r="6" fill="#e01010"/>

<!-- taskbar -->
<path d="M16 1173.500l6.500-1v7H16zM23.500 1172.300l8.500-1.300v8.500h-8.500zM16 1180.500h6.500v7l-6.500-1zM23.500 1180.500H32v8.500l-8.500-1.300z" fill="#fff"/>
<rect x="65" y="1175" width="10" height="10" fill="none" stroke="#eee"/><path d="M64 1172.500h12M64 1187.500h12M78.500 1172v2M78.500 1178v10" stroke="#eee" stroke-width="1.300"/><rect x="77" y="1175.500" width="3" height="3" fill="#eee"/>
<g id="ex"><path d="M110 1172h10l2 2h9v15h-21z" fill="#d9a93a"/><rect x="110" y="1175" width="21" height="14" fill="#f5d98a"/><path d="M114 1189v-7h13v7h-3v-3h-7v3z" fill="#3a8fd0"/></g>
<use href="#ex" x="175"/>
<circle cx="164" cy="1181" r="11" fill="#f35c2a"/><path d="M156 1172c4-2 9-1 13 2 2-1 2-3 1-5 5 2 6 8 5 12-3-4-8-4-11-2-5 0-8-3-8-7z" fill="#f9a82b"/><circle cx="164" cy="1181" r="4.500" fill="#7d3bb0"/>
<path d="M199 1172l9-2 1 8-11 2z" fill="#d96a2c"/><path d="M209 1170l11-1-2 9-8 1z" fill="#6aaa3a"/><path d="M198 1181l11-2-1 9-12 1z" fill="#4a80c0"/><path d="M210 1180l8-1-2 9-7 1z" fill="#e8c840"/><circle cx="204" cy="1180" r="5" fill="#dcebfa" stroke="#c8a040"/><path d="M207 1184l7 6" stroke="#d8d0b0" stroke-width="2"/>
<rect x="240" y="1168" width="23" height="23" fill="#0000c8"/><rect x="264" y="1170" width="1" height="21" fill="#777"/><rect x="246" y="1169" width="13" height="6" fill="#bcc"/><rect x="252" y="1169" width="3" height="5" fill="#226"/><rect x="244" y="1178" width="16" height="12" fill="#f33"/><path d="M244 1181h16M244 1184h16M244 1187h16" stroke="#fcc"/>
<rect x="329.500" y="1169" width="21" height="19" fill="#0c1a3a" stroke="#8ab4e0" stroke-width="1.200"/>
<ellipse cx="386" cy="1181" rx="9" ry="7" fill="#ef7d1c"/><path d="M372 1183l9-6v-4l-3 2" fill="#ef7d1c" stroke="#ef7d1c"/><circle cx="387" cy="1181" r="4" fill="#fff"/><circle cx="387" cy="1181" r="2.500" fill="#1c5c9c"/>
<path d="M417.500 1184a10.500 10.500 0 0 1 21 0" fill="none" stroke="#0000c8" stroke-width="2.600"/><rect x="416" y="1181" width="4" height="9" rx="2" fill="#0000c8"/><rect x="436" y="1181" width="4" height="9" rx="2" fill="#0000c8"/><ellipse cx="428" cy="1184" rx="6.500" ry="6.500" fill="#e8a020"/><path d="M421.500 1184h13" stroke="#d01010" stroke-width="3"/>
<rect x="461" y="1169" width="18" height="22" fill="#d8e8d0" stroke="#aaa"/><rect x="463" y="1182" width="14" height="8" fill="#5cc05c"/><path d="M475 1183l8-14" stroke="#c8a040" stroke-width="2.400"/><path d="M464 1177h6" stroke="#444"/>
<rect x="504.500" y="1170.500" width="22" height="18" fill="#0a0a0a" stroke="#999"/><path d="M508 1176h5M512 1179h5" stroke="#ddd"/>
<path d="M549 1178c2-3 20-3 22 0-1 9-6 12-11 12s-10-3-11-12z" fill="#e08a10"/><circle cx="551" cy="1173" r="1.800" fill="#e08a10"/><circle cx="557" cy="1171" r="1.800" fill="#e08a10"/><circle cx="564" cy="1171" r="1.800" fill="#e08a10"/><circle cx="570" cy="1174" r="1.800" fill="#e08a10"/><circle cx="560" cy="1181" r="4.500" fill="#2a1a08"/><circle cx="560" cy="1181" r="2.500" fill="none" stroke="#d02020"/>
<rect x="593" y="1169" width="6" height="9" rx="1" fill="#e0c060"/><path d="M601 1170h7v12M594 1182v6h7" fill="none" stroke="#3a8a3a" stroke-dasharray="2 1.500"/><path d="M603 1179l10 11M615 1179l-11 11" stroke="#ccc" stroke-width="2.200"/>
<path d="M648 1180c-3-4-9-4-10 0s6 4 10 0c3-4 9-4 10 0s-7 4-10 0z" fill="none" stroke="#4a68c0" stroke-width="2.400"/><path d="M648 1180c3-4 9-4 10 0" fill="none" stroke="#7a4ac0" stroke-width="2.400"/>
<rect x="688" y="1170" width="14" height="13" rx="3" fill="none" stroke="#8ac03a" stroke-width="2.800"/><rect x="681" y="1177" width="14" height="13" rx="3" fill="#2d2b26" stroke="#8ac03a" stroke-width="2.800"/><rect x="685" y="1180" width="6" height="6" fill="#e0a020"/><rect x="692" y="1174" width="6" height="6" fill="#e0a020"/>
<path d="M726 1172l17-3 1 4-17 3z" fill="#222"/><path d="M728 1171.500l3-.5M733 1170.500l3-.5M738 1169.700l3-.5" stroke="#fff" stroke-width="2"/><rect x="727" y="1176" width="16" height="14" fill="#eee" stroke="#333"/><path d="M736 1176l13 7-13 8z" fill="#b8d0f0"/><path d="M730 1179h3v3h-2M733 1182v3h-3" fill="none" stroke="#d02020" stroke-width="1.200"/>
<circle cx="779" cy="1180" r="11" fill="#1a8ad0"/><path d="M771 1181c3 0 6 0 8 3 2-3 5-3 8-3-2 3-5 5-8 5s-6-2-8-5zM776 1175c2 0 3 0 3 2 0-2 1-2 3-2-1 2-2 3-3 3s-2-1-3-3z" fill="#fff"/>
<ellipse cx="824" cy="1180" rx="10" ry="11" fill="#d91c24"/><ellipse cx="824" cy="1180" rx="4" ry="8" fill="#2d2b26"/>
<path d="M880 1168v23l-8 1-16-6-1-10 7-3 6 4zM875 1172l-7 8 7 6z" fill="#8a5cc2"/><path d="M860 1177l4 3-4 3z" fill="#2d2b26"/>
<circle cx="908" cy="1175" r="8" fill="#3a9a5a"/><path d="M904 1170l6 3-2 5-5-2z" fill="#e8c040"/><rect x="911" y="1174" width="11" height="16" fill="#9a9ea6"/><rect x="912" y="1176" width="5" height="14" fill="#d0d4dc"/>
<rect x="943" y="1169" width="23" height="23" rx="3" fill="#16181c" stroke="#555"/>
<circle cx="997" cy="1180" r="11" fill="#050505"/><path d="M994 1176l7-3M994 1176l5 8" stroke="#3ab0e8" stroke-width="1.800"/><circle cx="994" cy="1176" r="2.800" fill="#3ab0e8"/><circle cx="1001" cy="1173" r="2.200" fill="#3ab0e8"/><circle cx="999" cy="1185" r="2.800" fill="#3ab0e8"/>
<path d="M1034 1169h14l2 22h-21z" fill="#7ec0c8"/><path d="M1037 1169h11l2 22h-11z" fill="#cfe0e4"/><path d="M1030 1190l8-10" stroke="#3a8a8a" stroke-width="2"/>
<circle cx="1083" cy="1180" r="10.500" fill="#eee"/><path d="M1077 1173l13 14M1089 1173l-12 14M1074 1180h18" stroke="#2d2b26" stroke-width="1.500"/>
<path d="M1116 1175l8-2 11 1 2 11-12 3-9-2z" fill="#c8ced8"/><path d="M1124 1173l1 15" stroke="#888"/><circle cx="1133" cy="1180" r="2" fill="#5a9a3a"/>
<path d="M1157 1172l4-2 5 6 7-6 4-2 3 2v20l-3 2-4-2-7-6-5 6-4-2 5-8z" fill="#8a5cc2"/><path d="M1169 1180l5-4v8z" fill="#5d5b55"/>
<rect x="1200" y="1168" width="24" height="24" fill="#f0eab0"/>
<rect x="1243" y="1168" width="24" height="24" rx="2" fill="#1f85e8"/>
<rect x="1283" y="1172" width="16" height="16" fill="#0a0a7a"/><rect x="1283" y="1172" width="5" height="16" fill="#000"/><rect x="1291" y="1172" width="8" height="16" fill="#a01010"/><path d="M1289 1176a2.500 2.500 0 1 1 3 3v2.500M1292 1183v2" fill="none" stroke="#f5e040" stroke-width="1.800"/>
<path d="M1306 1188l5-9h4v9z" fill="#5a9a3a"/><path d="M1317 1172l6 11h-11z" fill="#e8d040"/><path d="M1317 1175v5M1317 1181v1.200" stroke="#333"/>
<circle cx="1339" cy="1180" r="7.500" fill="none" stroke="#fff" stroke-width="1.200"/><path d="M1331.500 1180h15M1339 1172.500c-5 4-5 11 0 15M1339 1172.500c5 4 5 11 0 15" fill="none" stroke="#fff"/><circle cx="1345" cy="1186" r="3" fill="#2d2b26" stroke="#fff"/>
<path d="M1358 1172h9v12c0 3-2 4-4.500 4s-4.500-1-4.500-4z" fill="#d8d8d8"/><path d="M1362.500 1172v6" stroke="#888"/>
<path d="M1380 1177h3l3-3v12l-3-3h-3z" fill="none" stroke="#eee"/><path d="M1389 1177c1.500 2 1.500 4 0 6M1392 1175c2 3 2 7 0 10M1394.500 1173c3 4 3 10 0 14" fill="none" stroke="#999"/>
<rect x="1403" y="1173" width="16" height="15" fill="#e4e4e4"/><path d="M1404 1187l4-7 3 2 3-3 4 6z" fill="#2fa03a"/><rect x="1403" y="1186" width="2" height="2" fill="#e02020"/>
<path d="M1559 1170h15v13h-8l-2 4v-4h-5z" fill="#fff"/><path d="M1562 1174h9M1562 1177h9M1562 1180h9" stroke="#2d2b26"/><circle cx="1574" cy="1189" r="6" fill="#2d2b26" stroke="#bbb"/>
</svg>

<!-- menu -->
<span class="t" style="left:44px;top:7px">File</span>
<span class="t" style="left:83px;top:7px">Edit</span>
<span class="t" style="left:122px;top:7px">View</span>
<span class="t" style="left:167px;top:7px">Git</span>
<span class="t" style="left:202px;top:7px">Project</span>
<span class="t" style="left:259px;top:7px">Build</span>
<span class="t" style="left:306px;top:7px">Debug</span>
<span class="t" style="left:361px;top:7px">Test</span>
<span class="t" style="left:401px;top:8px;font-size:11.6px">Analyze</span>
<span class="t" style="left:462px;top:7px">Tools</span>
<span class="t" style="left:509px;top:8px;font-size:11.5px">Extensions</span>
<span class="t" style="left:585px;top:7px;font-size:12.2px">Window</span>
<span class="t" style="left:649px;top:7px">Help</span>
<span class="t" style="left:699px;top:7px;color:#666">Search (Ctrl+Q)</span>
<span class="t" style="left:940px;top:7px;color:#40568d">Move</span>
<span class="t" style="left:1424px;top:7px;color:#fff;font-size:12.5px">VE</span>
<span class="t" style="left:331px;top:37px">Debug</span>
<span class="t" style="left:427px;top:37px">Any CPU</span>
<span class="t" style="left:542px;top:37px">Move</span>
<span class="t" style="left:766px;top:37px">Move</span>
<span class="t" style="left:1400px;top:39px;font-size:11.5px">Live Share</span>
<span class="t w" style="left:1527px;top:37px;font-weight:bold;font-size:11px">PREVIEW</span>
<span class="t w" style="left:11px;top:76px;font-size:11.4px">SQL Server Object Explorer</span>
<span class="t" style="left:172px;top:73px;font-size:12px">ApplicationUser.cs</span>
<span class="t w" style="left:318px;top:74px;font-size:11.75px">ConfigureDatabaseProvider.cs</span>
<span class="t w" style="left:526px;top:73px;font-size:12.2px">CryptoChestNewDb.csproj</span>
<span class="t w" style="left:715px;top:73px;font-size:12.2px">Program.cs</span>
<span class="t w" style="left:824px;top:74px;font-size:11.4px">ShareOwners.cs</span>
<span class="t w" style="left:956px;top:73px;font-size:12.1px">ApplicationDbContext.cs</span>
<span class="t w" style="left:1262px;top:75px">Solution Explorer</span>
<span class="t" style="left:1263px;top:125px;color:#555;font-size:11.7px">Search Solution Explorer (Ctrl+;)</span>
<span class="t" style="left:189px;top:95px;font-size:12px">CryptoChestNewDb</span>
<span class="cs" style="left:172px;top:95px;color:#222">C#</span>
<span class="t g" style="left:544px;top:96px;font-size:11.6px">Models.ApplicationUser</span>
<span class="t g" style="left:899px;top:95px;font-size:12px">DiscordId</span>
<span class="t w" style="left:1578px;top:73px;height:70px;writing-mode:vertical-rl;line-height:14px;font-size:12px">Notifications</span>

<!-- left tree text -->
<div class="b tr" style="left:0;top:0;width:139px;height:1093px;overflow:hidden">
<span class="t" style="left:71.5px;top:121px">dbo.HostingInfo</span>
<span class="t" style="left:71.5px;top:139px">dbo.IPPorts</span>
<span class="t" style="left:71.5px;top:157px">dbo.Masternodes</span>
<span class="t" style="left:71.5px;top:175px">dbo.Masternodes</span>
<span class="t" style="left:71.5px;top:193px">dbo.Masternodes</span>
<span class="t" style="left:71.5px;top:211px">dbo.Masternodes</span>
<span class="t" style="left:71.5px;top:229px">dbo.Masternodes</span>
<span class="t" style="left:71.5px;top:247px">dbo.Masternodes</span>
<span class="t" style="left:71.5px;top:265px">dbo.Masternodes</span>
<span class="t" style="left:71.5px;top:283px">dbo.Masternodes</span>
<span class="t" style="left:71.5px;top:301px">dbo.MyDrops</span>
<span class="t" style="left:71.5px;top:319px">dbo.Operatins</span>
<span class="t" style="left:71.5px;top:337px">dbo.Packages</span>
<span class="t" style="left:71.5px;top:355px">dbo.Pendings</span>
<span class="t" style="left:71.5px;top:373px">dbo.Scammers</span>
<span class="t" style="left:71.5px;top:391px">dbo.Scammers</span>
<span class="t" style="left:71.5px;top:409px">dbo.ServerAPI</span>
<span class="t" style="left:71.5px;top:427px">dbo.Servers</span>
<span class="t" style="left:71.5px;top:445px">dbo.ShareOwners</span>
<span class="t" style="left:89px;top:463px">Columns</span>
<span class="t" style="left:107px;top:481px">ShareId</span>
<span class="t" style="left:107px;top:499px">UserId</span>
<span class="t" style="left:107px;top:517px">Masternode</span>
<span class="t" style="left:107px;top:535px">Shares</span>
<span class="t" style="left:89px;top:553px">Keys</span>
<span class="t" style="left:89px;top:571px">Constraints</span>
<span class="t" style="left:89px;top:589px">Triggers</span>
<span class="t" style="left:89px;top:607px">Indexes</span>
<span class="t" style="left:89px;top:625px">Statistics</span>
<span class="t" style="left:71.5px;top:643px">dbo.StakePays</span>
<span class="t" style="left:71.5px;top:661px">dbo.StakePools</span>
<span class="t" style="left:71.5px;top:679px">dbo.StakeTrans</span>
<span class="t" style="left:71.5px;top:697px">dbo.UserAddress</span>
<span class="t" style="left:71.5px;top:715px">dbo.UserBalance</span>
<span class="t" style="left:71.5px;top:733px">dbo.UserDeposit</span>
<span class="t" style="left:71.5px;top:751px">dbo.UserWithdraw</span>
<span class="t" style="left:71.5px;top:769px">dbo.Wallets</span>
<span class="t" style="left:71.5px;top:787px">dbo.WatchOnly</span>
<span class="t" style="left:53px;top:805px">Views</span>
<span class="t" style="left:53px;top:823px">Synonyms</span>
<span class="t" style="left:53px;top:841px">Programmability</span>
<span class="t" style="left:53px;top:859px">External Resources</span>
<span class="t" style="left:53px;top:877px">Service Broker</span>
<span class="t" style="left:53px;top:895px">Storage</span>
<span class="t" style="left:53px;top:913px">Security</span>
<span class="t" style="left:35px;top:932px;font-size:11px">E:\PROJECTS\FREELANCE</span>
<span class="t" style="left:35px;top:949px">JoggingTracker</span>
<span class="t" style="left:35px;top:967px">MacdTest</span>
<span class="t" style="left:35px;top:985px">mailwork</span>
<span class="t" style="left:35px;top:1003px">MyArticles</span>
<span class="t" style="left:35px;top:1021px">Samantha</span>
<span class="t" style="left:35px;top:1039px">ScaffoldIdentity</span>
<span class="t" style="left:35px;top:1057px">SchoolContext</span>
<span class="t" style="left:17px;top:1075px">Security</span>
</div>

<!-- code -->
<span class="n" style="top:115px">1</span><span class="n" style="top:134px">2</span><span class="n" style="top:153px">3</span><span class="n" style="top:172px">4</span><span class="n" style="top:191px">5</span><span class="n" style="top:210px">6</span><span class="n" style="top:229px">7</span><span class="n" style="top:248px">8</span><span class="n" style="top:267px">9</span><span class="n" style="top:299px">10</span><span class="n" style="top:318px">11</span><span class="n" style="top:350px">12</span><span class="n" style="top:382px">13</span><span class="n" style="top:414px">14</span><span class="n" style="top:446px">15</span><span class="n" style="top:478px">16</span><span class="n" style="top:510px">17</span><span class="n" style="top:542px">18</span><span class="n" style="top:574px">19</span><span class="n" style="top:606px">20</span><span class="n" style="top:625px">21</span><span class="n" style="top:644px">22</span><span class="n" style="top:663px">23</span>
<div class="c" style="top:115px"><span class="k">using</span> Microsoft.AspNetCore.Identity;</div>
<div class="c" style="top:134px"><span class="k">using</span> System;</div>
<div class="c" style="top:153px"><span class="k">using</span> System.Security.Claims;</div>
<div class="c" style="top:172px"><span class="k">using</span> System.Threading.Tasks;</div>
<div class="c m" style="top:210px">//changed CreateIdentityAsync/DefaultAuthenticationTypes delete in NetCore 3.1</div>
<div class="c" style="top:248px"><span class="k">namespace</span> Models</div>
<div class="c" style="top:267px">{</div>
<span class="r" style="top:286px;left:296px">2 references</span>
<div class="c" style="top:299px">    <span class="k">public class</span> <span class="y">ApplicationUser</span> : <span class="y">IdentityUser</span></div>
<div class="c" style="top:318px">    {</div>
<span class="r" style="top:337px">0 references</span>
<div class="c" style="top:350px">        <span class="k">public string</span> DiscordId { <span class="k">get</span>; <span class="k">set</span>; }</div>
<span class="r" style="top:369px">0 references</span>
<div class="c" style="top:382px">        <span class="k">public bool</span> DiscordEnabled { <span class="k">get</span>; <span class="k">set</span>; }</div>
<span class="r" style="top:401px">0 references</span>
<div class="c" style="top:414px">        <span class="k">public string</span> DiscordServerId { <span class="k">get</span>; <span class="k">set</span>; }</div>
<span class="r" style="top:433px">0 references</span>
<div class="c" style="top:446px">        <span class="k">public bool</span> IsGoogleAuthenticatorEnabled { <span class="k">get</span>; <span class="k">set</span>; }</div>
<span class="r" style="top:465px">0 references</span>
<div class="c" style="top:478px">        <span class="k">public string</span> GoogleAuthenticatorSecretKey { <span class="k">get</span>; <span class="k">set</span>; }</div>
<span class="r" style="top:497px">0 references</span>
<div class="c" style="top:510px">        <span class="k">public string</span> IPAddress { <span class="k">get</span>; <span class="k">set</span>; }</div>
<span class="r" style="top:529px">0 references</span>
<div class="c" style="top:542px">        <span class="k">public string</span> UserAgent { <span class="k">get</span>; <span class="k">set</span>; }</div>
<span class="r" style="top:561px">0 references</span>
<div class="c" style="top:574px">        <span class="k">public bool</span> ResetDone { <span class="k">get</span>; <span class="k">set</span>; }</div>
<span class="r" style="top:593px">0 references</span>
<div class="c" style="top:606px">        <span class="k">public</span> <span class="y">Guid</span> APIKey { <span class="k">get</span>; <span class="k">set</span>; }</div>
<div class="c" style="top:644px">    }</div>
<div class="c" style="top:663px">}</div>

<!-- editor status -->
<span class="t" style="left:170px;top:1007px;font-size:11.5px">100 %</span>
<span class="t" style="left:268px;top:1007px;font-size:11.5px">No issues found</span>
<span class="t" style="left:1089px;top:1007px;font-size:11px">Ln: 1</span>
<span class="t" style="left:1131px;top:1007px;font-size:11px">Ch: 1</span>
<span class="t" style="left:1176px;top:1007px;font-size:11px">SPC</span>
<span class="t" style="left:1215px;top:1007px;font-size:11px">CRLF</span>

<!-- output -->
<span class="t w" style="left:172px;top:1033px">Output</span>
<span class="t" style="left:175px;top:1057px;font-size:12.3px">Show output from:</span>
<span class="t" style="left:285px;top:1058px;font-size:11.5px">String Resource Visualizer</span>
<div class="c" style="left:180px;top:1078px;font-size:11.68px;line-height:18px;color:#1e1e1e">If you have problems, or suggestions for improvement, report them at <span style="color:#0000ee;text-decoration:underline">https://github.com/mrlacey/StringResourceVisualizer/issues/new</span></div>

<!-- bottom tabs text -->
<span class="t w" style="left:12px;top:1112px;font-size:11.5px">Test Explorer</span>
<span class="t" style="left:90px;top:1112px;font-size:11.2px">SQL Server...</span>
<span class="t w" style="left:173px;top:1112px;font-size:11.2px">Task List</span>
<span class="t w" style="left:228px;top:1112px;font-size:11.7px">Call Hierarchy</span>
<span class="t w" style="left:314px;top:1111px;font-size:12.2px">Web Publish Activity</span>
<span class="t w" style="left:435px;top:1112px;font-size:11.7px">Package Manager Console</span>
<span class="t w" style="left:587px;top:1112px;font-size:11.5px">Error List</span>
<span class="t" style="left:645px;top:1111px;font-size:12.2px">Output</span>

<!-- SE tree text -->
<div class="b tr" style="left:0;top:0;width:1567px;height:959px;overflow:hidden">
<span class="t" style="left:1291px;top:146px">Solution 'Move' (2 of 2 projects)</span>
<span class="cs" style="left:1290px;top:164px;color:#222">C#</span>
<span class="t" style="left:1309px;top:164px">CryptoChestNewDb</span>
<span class="t" style="left:1327px;top:183px;font-size:11.6px">Dependencies</span>
<span class="t" style="left:1345px;top:201px;font-size:11.6px">Analyzers</span>
<span class="t" style="left:1345px;top:218px">Frameworks</span>
<span class="t" style="left:1345px;top:236px">Packages</span>
<span class="t" style="left:1327px;top:254px">Properties</span>
<span class="t" style="left:1327px;top:272px">Migrations</span>
<span class="cs" style="left:1327px;top:290px">C#</span><span class="t" style="left:1345px;top:290px;letter-spacing:-.05px">20200624210431_MySqlStart.cs</span>
<span class="cs" style="left:1345px;top:308px">C#</span><span class="t" style="left:1363px;top:308px;letter-spacing:-.3px">20200624210431_MySqlStart.Designer.cs</span>
<span class="cs" style="left:1327px;top:326px">C#</span><span class="t" style="left:1345px;top:326px">ApplicationDbContextModelSnapshot.cs</span>
<span class="t" style="left:1327px;top:344px">Models</span>
<span class="t" style="left:1345px;top:362px">CNData</span>
<span class="t" style="left:1345px;top:380px">Db</span>
<span class="cs" style="left:1327px;top:398px">C#</span><span class="t" style="left:1345px;top:398px">AccountViewModels.cs</span>
<span class="cs" style="left:1327px;top:416px">C#</span><span class="t" style="left:1345px;top:416px">APISessionKeys.cs</span>
<span class="cs" style="left:1327px;top:434px">C#</span><span class="t" style="left:1345px;top:434px">ApplicationDbContext.cs</span>
<span class="cs" style="left:1327px;top:452px">C#</span><span class="t" style="left:1345px;top:452px">ApplicationUser.cs</span>
<span class="cs" style="left:1327px;top:470px">C#</span><span class="t" style="left:1345px;top:470px">AppSettings.cs</span>
<span class="cs" style="left:1327px;top:488px">C#</span><span class="t" style="left:1345px;top:488px">CoinImages.cs</span>
<span class="cs" style="left:1327px;top:506px">C#</span><span class="t" style="left:1345px;top:506px">GoogleAuth.cs</span>
<span class="cs" style="left:1327px;top:524px">C#</span><span class="t" style="left:1345px;top:524px">ManageViewModels.cs</span>
<span class="cs" style="left:1327px;top:542px">C#</span><span class="t" style="left:1345px;top:542px">Scammers.cs</span>
<span class="cs" style="left:1327px;top:560px">C#</span><span class="t" style="left:1345px;top:560px">WebViewModels.cs</span>
<span class="t" style="left:1327px;top:578px">appsettings.json</span>
<span class="cs" style="left:1309px;top:596px">C#</span><span class="t" style="left:1327px;top:596px;font-size:11.8px">ConfigureDatabaseProvider.cs</span>
<span class="t" style="left:1327px;top:614px">dump0001.sql</span>
<span class="cs" style="left:1290px;top:632px;color:#222">C#</span>
<span class="t" style="left:1309px;top:632px;font-weight:bold">Move</span>
</div>
<span class="t" style="left:1263px;top:975px;font-size:11.6px">Solution Ex...</span>
<span class="t w" style="left:1347px;top:975px;font-size:11.4px">Class View</span>
<span class="t w" style="left:1415px;top:975px;font-size:11.6px">Team Explo...</span>
<span class="t w" style="left:1499px;top:975px;font-size:11.5px">Git Changes</span>
<span class="t w" style="left:1262px;top:1004px">Properties</span>
<span class="t" style="left:1295px;top:1060px;font-size:20px;line-height:26px;color:rgba(120,125,145,.55)">Activate Windows</span>
<span class="t" style="left:1295px;top:1085px;font-size:14.4px;line-height:20px;color:rgba(120,125,145,.55)">Go to Settings to activate Windows.</span>
<span class="cs" style="left:1290px;top:1051px;color:#222;font-size:8px;line-height:10px">A</span>
<span class="cs" style="left:1290px;top:1060px;color:#222;font-size:8px;line-height:10px">Z</span>

<!-- status bar -->
<span class="t w" style="left:28px;top:1140px">Ready</span>
<span class="t w" style="left:1309px;top:1140px">2</span>
<span class="t w" style="left:1361px;top:1140px">6</span>
<span class="t w" style="left:1412px;top:1140px">Move</span>
<span class="t w" style="left:1485px;top:1140px">master</span>
<span class="t w" style="left:1572px;top:1143px;font-size:10px;line-height:18px">3</span>

<!-- taskbar text -->
<span class="t" style="left:333px;top:1170px;color:#8ab4e0;font-weight:bold;font-size:13px">Ps</span>
<span class="t w" style="left:947px;top:1173px;font-weight:bold;font-size:13px;letter-spacing:-.5px">mR</span>
<span class="t" style="left:1201px;top:1166px;font:bold 12px/14px 'Liberation Sans',sans-serif;color:#1a1a6a;letter-spacing:.5px">VB-</span>
<span class="t" style="left:1201px;top:1178px;font:bold 12px/14px 'Liberation Sans',sans-serif;color:#1a1a6a">NET</span>
<span class="t w" style="left:1245px;top:1170px;font-size:18px;letter-spacing:-1px;line-height:20px">Vc</span>
<span class="t w" style="left:1453px;top:1171px;font-size:12px">ENG</span>
<span class="t w" style="left:1491px;top:1161px;width:46px;text-align:center">11:03 PM</span>
<span class="t w" style="left:1486px;top:1180px;width:56px;text-align:center">7/28/2020</span>
<span class="t w" style="left:1571px;top:1180px;font-size:10px">1</span>
</body></html>
